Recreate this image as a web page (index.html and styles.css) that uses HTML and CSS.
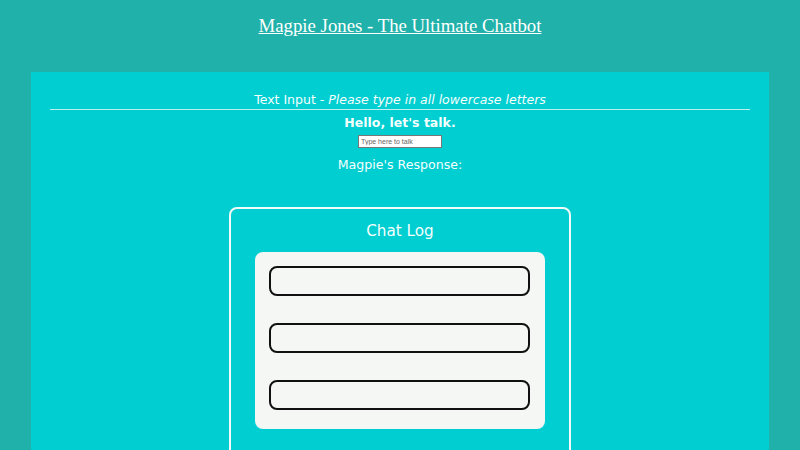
FILE: index.html
```html
<!DOCTYPE html>
<html>
<head>
<meta charset="utf-8">
<link rel="stylesheet" href="styles.css">
</head>
<body>
<header class="top">
  <a class="title" href="#">Magpie Jones - The Ultimate Chatbot</a>
</header>
<main class="panel">
  <div class="label">Text Input - <em>Please type in all lowercase letters</em></div>
  <hr class="rule">
  <div class="hello">Hello, let's talk.</div>
  <input class="talk" type="text" placeholder="Type here to talk">
  <div class="response">Magpie's Response:</div>
  <section class="log">
    <div class="log-title">Chat Log</div>
    <div class="log-inner">
      <div class="entry"></div>
      <div class="entry"></div>
      <div class="entry"></div>
    </div>
  </section>
</main>
</body>
</html>
```
FILE: styles.css
```css
html, body {
  margin: 0;
  padding: 0;
}
body {
  background: #20b2aa;
  font-family: "DejaVu Sans", sans-serif;
  color: #f5fffe;
  height: 450px;
  overflow: hidden;
}
.top {
  height: 72px;
  display: flex;
  justify-content: center;
  padding-top: 14px;
  box-sizing: border-box;
}
.title {
  font-family: "Liberation Serif", serif;
  font-size: 18.8px;
  color: #ffffff;
  text-decoration: underline;
  line-height: 24px;
}
.panel {
  margin: 0 31px;
  background: #00ced1;
  padding: 19px 19px 40px;
  display: flex;
  flex-direction: column;
  align-items: center;
  min-height: 400px;
}
.label {
  font-size: 12.5px;
  line-height: 18px;
}
.label em {
  font-style: oblique;
}
.rule {
  align-self: stretch;
  border: 0;
  border-top: 1px solid #b8f0ef;
  margin: 0 0 4px;
}
.hello {
  font-weight: bold;
  font-size: 12.5px;
  line-height: 18px;
}
.talk {
  margin-top: 3px;
  width: 84px;
  height: 13px;
  box-sizing: border-box;
  border: 1px solid #777;
  font-family: "Liberation Sans", sans-serif;
  font-size: 7px;
  padding: 0 2px;
  background: #fff;
}
.talk::placeholder {
  color: #666;
}
.response {
  margin-top: 8px;
  font-size: 12.6px;
  line-height: 18px;
}
.log {
  margin-top: 33px;
  width: 342px;
  box-sizing: border-box;
  border: 2px solid #f2fbfa;
  border-radius: 8px;
  padding: 0 24px 30px;
  display: flex;
  flex-direction: column;
  align-items: center;
}
.log-title {
  font-size: 15.2px;
  line-height: 22px;
  margin-top: 11px;
  margin-bottom: 10px;
}
.log-inner {
  align-self: stretch;
  background: #f5f7f5;
  border-radius: 8px;
  padding: 14px 14px 19px;
  display: flex;
  flex-direction: column;
  gap: 27px;
}
.entry {
  height: 30px;
  box-sizing: border-box;
  border: 2px solid #111;
  border-radius: 8px;
  margin-right: 1px;
}
```
